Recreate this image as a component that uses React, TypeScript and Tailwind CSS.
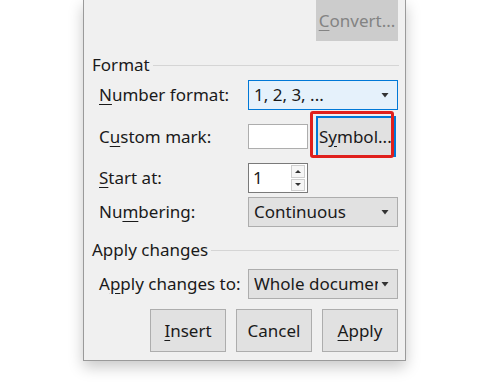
import React from 'react';

const FONT = { fontFamily: '"Noto Sans", "Open Sans", sans-serif' };

function Caret() {
  return (
    <svg width="8" height="5" viewBox="0 0 8 5" className="shrink-0">
      <path d="M0.5 0 H7.5 L4 4.5 Z" fill="#333" />
    </svg>
  );
}

function Label({ pre, u, post }: { pre: string; u: string; post: string }) {
  return (
    <span className="w-[149px] shrink-0 whitespace-nowrap">
      {pre}
      <span className="underline underline-offset-[3px]">{u}</span>
      {post}
    </span>
  );
}

function Select({ value, focused }: { value: string; focused?: boolean }) {
  return (
    <div
      className={`flex h-[30px] w-[150px] items-center overflow-hidden border pl-[5px] pr-[8px] ${
        focused ? 'border-[#0078d7] bg-[#e5f1fb]' : 'border-[#adadad] bg-[#e1e1e1]'
      }`}
    >
      <span className="mr-[3px] flex-1 overflow-hidden whitespace-nowrap">{value}</span>
      <Caret />
    </div>
  );
}

function GroupHeader({ title }: { title: string }) {
  return (
    <div className="flex h-[20px] items-center pl-[8px] pr-[6px]">
      <span className="whitespace-nowrap pr-[3px]">{title}</span>
      <div className="h-px flex-1 bg-[#d5d5d5]" />
    </div>
  );
}

export default function App() {
  return (
    <div className="h-[392px] w-[487px] overflow-hidden bg-white text-[17px] text-[#1a1a1a]" style={FONT}>
      <div className="ml-[83px] flex h-[361px] w-[323px] flex-col border-x border-b border-[#9a9a9a] bg-[#f0f0f0] shadow-[0_6px_14px_rgba(0,0,0,0.22)]">
        {/* Convert button (disabled) */}
        <div className="flex justify-end pr-[7px]">
          <div className="flex h-[41px] w-[82px] items-center justify-center bg-[#cccccc] text-[#838383]">
            <span>
              <span className="underline underline-offset-[3px]">C</span>onvert...
            </span>
          </div>
        </div>

        <div className="mt-[14px]">
          <GroupHeader title="Format" />
        </div>

        <div className="mt-[5px] flex h-[30px] items-center pl-[15px]">
          <Label pre="" u="N" post="umber format:" />
          <Select value="1, 2, 3, ..." focused />
        </div>

        <div className="relative mt-[6px] flex h-[41px] items-center pl-[15px]">
          <Label pre="C" u="u" post="stom mark:" />
          <div className="h-[25px] w-[60px] shrink-0 border border-[#adadad] bg-white" />
          <div className="ml-[8px] flex h-[41px] w-[80px] shrink-0 items-center overflow-hidden border-2 border-[#0078d7] bg-[#e1e1e1] pl-[1px]">
            <span className="whitespace-nowrap">
              S<span className="underline underline-offset-[3px]">y</span>mbol...
            </span>
          </div>
          <div className="absolute left-[226px] top-[-5px] h-[47px] w-[84px] rounded-[3px] border-[3px] border-[#e0201c]" />
        </div>

        <div className="mt-[6px] flex h-[30px] items-center pl-[15px]">
          <Label pre="" u="S" post="tart at:" />
          <div className="flex h-[30px] w-[60px] shrink-0 items-center border border-[#7a7a7a] bg-white pl-[4px] pr-[2px]">
            <span className="flex-1">1</span>
            <div className="flex h-[26px] w-[14px] flex-col gap-px">
              <div className="flex flex-1 items-center justify-center border border-[#cfcfcf] bg-[#f6f6f6]">
                <svg width="6" height="3" viewBox="0 0 6 3">
                  <path d="M0 3 L3 0 L6 3 Z" fill="#333" />
                </svg>
              </div>
              <div className="flex flex-1 items-center justify-center border border-[#cfcfcf] bg-[#f6f6f6]">
                <svg width="6" height="3" viewBox="0 0 6 3">
                  <path d="M0 0 H6 L3 3 Z" fill="#333" />
                </svg>
              </div>
            </div>
          </div>
        </div>

        <div className="mt-[4px] flex h-[30px] items-center pl-[15px]">
          <Label pre="Nu" u="m" post="bering:" />
          <Select value="Continuous" />
        </div>

        <div className="mt-[13px]">
          <GroupHeader title="Apply changes" />
        </div>

        <div className="mt-[9px] flex h-[30px] items-center pl-[15px]">
          <Label pre="A" u="p" post="ply changes to:" />
          <Select value="Whole document" />
        </div>

        <div className="mt-[10px] flex justify-end gap-[10px] pr-[7px]">
          {[
            ['', 'I', 'nsert'],
            ['', '', 'Cancel'],
            ['', 'A', 'pply'],
          ].map(([a, u, b]) => (
            <div
              key={b}
              className="flex h-[43px] w-[76px] items-center justify-center border border-[#adadad] bg-[#e1e1e1]"
            >
              <span>
                {a}
                {u && <span className="underline underline-offset-[3px]">{u}</span>}
                {b}
              </span>
            </div>
          ))}
        </div>
      </div>
    </div>
  );
}
